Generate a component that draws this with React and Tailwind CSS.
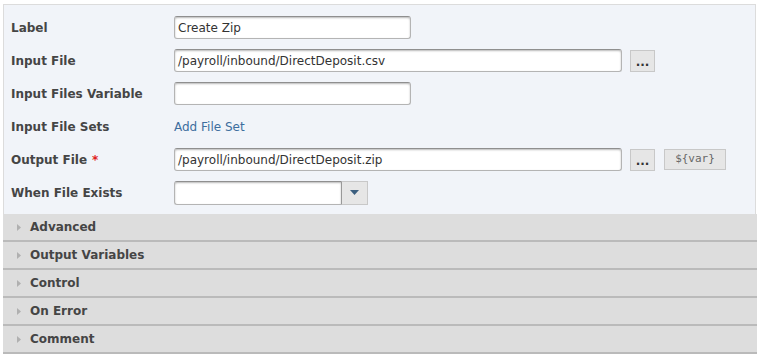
import React from 'react';

const font = { fontFamily: '"DejaVu Sans", Verdana, sans-serif' };

const Input = ({ value = '', width }) => (
  <div
    className={`${width} h-[23px] bg-white border border-[#b4b4b4] border-t-[#8f8f8f] rounded-[3px] shadow-[inset_0_1px_2px_rgba(0,0,0,0.28)] flex items-center px-[3px] text-[12px] text-[#333]`}
  >
    {value}
  </div>
);

const DotsButton = () => (
  <div className="w-[25px] h-[22px] bg-[#e6e6e6] border border-[#c8c8c8] flex items-end justify-center pb-[3px] text-[12px] font-bold text-[#333] leading-none">
    ...
  </div>
);

const Row = ({ label, required, children }) => (
  <div className="flex items-center h-[33px]">
    <div className="w-[163px] text-[12px] font-bold text-[#454545]">
      {label}
      {required && <span className="text-[#e02020] ml-[5px]">*</span>}
    </div>
    <div className="flex items-center">{children}</div>
  </div>
);

const sections = ['Advanced', 'Output Variables', 'Control', 'On Error', 'Comment'];

export default function App() {
  return (
    <div className="w-[763px] h-[361px] bg-white pt-[4px] pl-[3px]" style={font}>
      <div className="w-[753px] border-t border-l border-r border-[#dcdcdc] bg-[#f1f4f9]">
        <div className="pl-[7px] pt-[6px] pb-[5px]">
          <Row label="Label">
            <Input value="Create Zip" width="w-[237px]" />
          </Row>
          <Row label="Input File">
            <Input value="/payroll/inbound/DirectDeposit.csv" width="w-[448px]" />
            <div className="ml-[8px]">
              <DotsButton />
            </div>
          </Row>
          <Row label="Input Files Variable">
            <Input width="w-[237px]" />
          </Row>
          <Row label="Input File Sets">
            <span className="text-[12px] text-[#3d6e9e]">Add File Set</span>
          </Row>
          <Row label="Output File" required>
            <Input value="/payroll/inbound/DirectDeposit.zip" width="w-[448px]" />
            <div className="ml-[8px]">
              <DotsButton />
            </div>
            <div className="ml-[9px] w-[62px] h-[21px] bg-[#e6e6e6] border border-[#c8c8c8] flex items-center justify-center text-[11px] text-[#666]" style={{ fontFamily: '"DejaVu Sans Mono", monospace' }}>
              {'${var}'}
            </div>
          </Row>
          <Row label="When File Exists">
            <div className="flex h-[24px]">
              <div className="w-[168px] h-full bg-white border border-[#b4b4b4] border-t-[#8f8f8f] border-r-[#999] rounded-l-[3px] shadow-[inset_0_1px_2px_rgba(0,0,0,0.28)]" />
              <div className="w-[26px] h-full bg-[#e6e6e6] border border-l-0 border-[#c8c8c8] flex items-center justify-center">
                <svg width="9" height="5" viewBox="0 0 9 5">
                  <path d="M0 0 H9 L4.5 5 Z" fill="#3b5f7f" />
                </svg>
              </div>
            </div>
          </Row>
        </div>
      </div>
      <div className="w-[754px]">
        {sections.map((s) => (
          <div key={s} className="h-[28px] bg-[#dddddd] border-b-2 border-[#bababa] flex items-center">
            <svg width="4" height="7" viewBox="0 0 4 7" className="ml-[14px] mr-[9px]">
              <path d="M0 0 L4 3.5 L0 7 Z" fill="#b0b0b0" />
            </svg>
            <span className="text-[12px] font-bold text-[#454545]">{s}</span>
          </div>
        ))}
      </div>
    </div>
  );
}
